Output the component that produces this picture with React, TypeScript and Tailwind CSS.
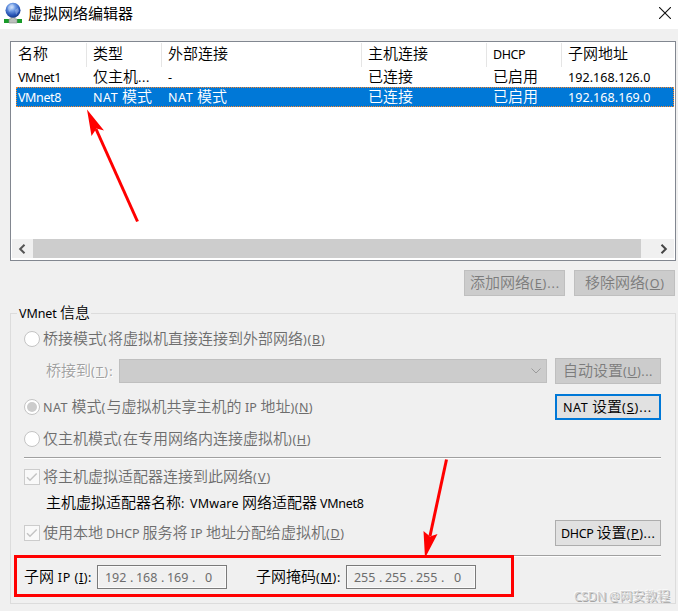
import { useLayoutEffect, useRef, useState } from "react";
import type { ReactNode } from "react";

const cjk = "font-['Noto_Sans_CJK_SC',sans-serif] text-[15px]";
const latin = "font-['Noto_Sans',sans-serif] text-[12.5px] font-normal";

/** Latin run tracked so that it fills exactly `w` pixels. */
function L({ w, children }: { w: number; children: ReactNode }) {
  const ref = useRef<HTMLSpanElement>(null);
  const [gap, setGap] = useState(0);
  useLayoutEffect(() => {
    const el = ref.current;
    if (!el) return;
    const count = (el.textContent ?? "").length;
    setGap((w - el.getBoundingClientRect().width) / count);
  }, [w]);
  return (
    <span ref={ref} className={latin} style={{ letterSpacing: gap }}>
      {children}
    </span>
  );
}

/** One line of mixed text; the line's own font sets the common baseline. */
function T({ children, className = "", weight = "font-[350]" }: { children: ReactNode; className?: string; weight?: string }) {
  return <div className={`h-5 shrink-0 whitespace-pre text-left leading-5 ${cjk} ${weight} ${className}`}>{children}</div>;
}

function Button({ children, kind = "normal", className = "" }: { children: ReactNode; kind?: "normal" | "disabled" | "focus"; className?: string }) {
  const look = {
    normal: "border border-[#adadad] bg-[#e1e1e1] text-black pt-px",
    disabled: "border border-[#bfbfbf] bg-[#cccccc] text-[#7c7c7c] pt-px",
    focus: "border-2 border-[#0078d7] bg-[#e1e1e1] text-black",
  }[kind];
  return <button className={`flex h-[26px] shrink-0 items-start ${look} ${className}`}>{children}</button>;
}

function Radio({ on = false }: { on?: boolean }) {
  return (
    <span className="flex size-4 shrink-0 items-center justify-center rounded-full border border-[#c4c4c4] bg-white">
      {on && <span className="size-[10px] rounded-full bg-[#cccccc]" />}
    </span>
  );
}

function Check() {
  return (
    <span className="size-4 shrink-0 border border-[#cccccc] bg-[#f9f9f9]">
      <svg viewBox="0 0 14 14" className="size-[14px]">
        <path d="M2 7.2 5 10.2 11.7 3.5" fill="none" stroke="#c4c4c4" strokeWidth="1.5" />
      </svg>
    </span>
  );
}

function Rule() {
  return <div className="h-[2px] w-[637px] border-t border-[#a0a0a0] bg-white" />;
}

function AddressField({ parts }: { parts: string[] }) {
  return (
    <div className="flex h-6 w-[130px] border border-[#7a7a7a] bg-[#f0f0f0] pl-[2px] text-[#6d6d6d] shadow-[inset_0_0_0_1px_#fafafa]">
      {parts.map((p, i) => (
        <T key={i} className="w-[31px]">
          <span className={p.length === 3 ? "inline-block w-[30px] pl-[5px]" : "inline-block w-[30px] pl-[12px]"}>
            <L w={p.length * 7.1}>{p}</L>
          </span>
          {i < 3 && <span className={latin}>.</span>}
        </T>
      ))}
    </div>
  );
}

const grid = "grid grid-cols-[75px_75px_200px_125px_75px_1fr]";
const divider = "h-6 border-l border-[#e5e5e5] pl-[6px]";

export default function App() {
  return (
    <div className="relative h-[611px] w-[678px] overflow-hidden bg-[#f0f0f0] text-black">
      <header className="flex h-[29px] items-start bg-white">
        <svg viewBox="0 0 18 22" className="ml-[4px] mt-[2px] h-[22px] w-[18px] shrink-0">
          <defs>
            <radialGradient id="globe" cx="42%" cy="30%" r="70%">
              <stop offset="0" stopColor="#dce9fb" />
              <stop offset=".35" stopColor="#6f9be4" />
              <stop offset=".75" stopColor="#2855b5" />
              <stop offset="1" stopColor="#173a8c" />
            </radialGradient>
          </defs>
          <path d="M0 17h18v4H0z" fill="#199b29" />
          <path d="M7 14h4v3h2v4H5v-4h2z" fill="#bcc0bd" stroke="#858a87" strokeWidth=".6" />
          <circle cx="9" cy="8.3" r="7.5" fill="url(#globe)" />
          <path d="M4 5q2-3 5-3l1 3-3 2-1 3q-2-1-2-5M11 8l3-2 1 3-3 4z" fill="#c5d8f7" opacity=".4" />
        </svg>
        <T weight="font-normal" className="ml-[6px] mt-[3px]">虚拟网络编辑器</T>
        <svg viewBox="0 0 12 12" className="ml-auto mr-[7px] mt-[7px] size-3 shrink-0">
          <path d="M0 0 12 12M12 0 0 12" stroke="#111" strokeWidth="1.1" />
        </svg>
      </header>

      <section className="ml-[10px] mt-[12px] flex h-[220px] w-[666px] flex-col border border-[#828790] bg-white">
        <div className={`${grid} h-[26px] pt-px`}>
          <T className="pl-[7px]">名称</T>
          <div className={divider}><T>类型</T></div>
          <div className={divider}><T>外部连接</T></div>
          <div className={divider}><T>主机连接</T></div>
          <div className={divider}><T><L w={32}>DHCP</L></T></div>
          <div className={divider}><T>子网地址</T></div>
        </div>
        <div className={`${grid} h-[19px]`}>
          <T className="-mt-[2px] pl-[7px]"><L w={43}>VMnet1</L></T>
          <T className="-mt-[2px] pl-[7px]">仅主机<L w={12}>...</L></T>
          <T className="-mt-[2px] pl-[7px]"><L w={5}>-</L></T>
          <T className="-mt-[2px] pl-[7px]">已连接</T>
          <T className="-mt-[2px] pl-[7px]">已启用</T>
          <T className="-mt-[2px] pl-[7px]"><L w={82.5}>192.168.126.0</L></T>
        </div>
        <div className="ml-[5px] mr-px h-5 border border-dotted border-[#ff8728] bg-[#0078d7] text-white">
          <div className={`${grid} -ml-[6px]`}>
            <T className="-mt-[2px] pl-[7px]"><L w={43}>VMnet8</L></T>
            <T className="-mt-[2px] pl-[7px]"><L w={29}>NAT </L>模式</T>
            <T className="-mt-[2px] pl-[7px]"><L w={29}>NAT </L>模式</T>
            <T className="-mt-[2px] pl-[7px]">已连接</T>
            <T className="-mt-[2px] pl-[7px]">已启用</T>
            <T className="-mt-[2px] pl-[7px]"><L w={82.5}>192.168.169.0</L></T>
          </div>
        </div>
        <div className="mx-px mb-[2px] mt-auto flex h-[19px] items-center bg-[#f0f0f0]">
          <span className="flex w-[21px] justify-center">
            <svg viewBox="0 0 8 10" className="mr-[2px] h-[10px] w-2"><path d="M6.5.8 2.2 5l4.3 4.2" fill="none" stroke="#555" strokeWidth="2" /></svg>
          </span>
          <span className="h-full w-[608px] bg-[#cdcdcd]" />
          <span className="flex flex-1 justify-center pl-[12px]">
            <svg viewBox="0 0 8 10" className="h-[10px] w-2"><path d="M1.5.8 5.8 5 1.5 9.2" fill="none" stroke="#444" strokeWidth="2" /></svg>
          </span>
        </div>
      </section>

      <div className="ml-[464px] mt-[9px] flex gap-[9px]">
        <Button kind="disabled" className="w-[101px] pl-[5px]"><T>添加网络<L w={30}>(<u>E</u>)...</L></T></Button>
        <Button kind="disabled" className="w-[101px] pl-[10px]"><T>移除网络<L w={20}>(<u>O</u>)</L></T></Button>
      </div>

      <section className="ml-[10px] mt-[17px] h-[291px] w-[666px] border border-[#dcdcdc] pl-[13px]">
        <T className="-ml-[7px] -mt-[12px] w-[74px] bg-[#f0f0f0] pl-[2px]"><L w={41}>VMnet </L>信息</T>
        <div className="mt-[7px] flex h-5 items-center text-[#6d6d6d]">
          <Radio />
          <T className="mb-[2px] ml-[3px]">桥接模式<L w={5}>(</L>将虚拟机直接连接到外部网络<L w={22.5}>)(<u>B</u>)</L></T>
        </div>
        <div className="mt-[9px] flex h-[26px] items-center">
          <T className="mb-[2px] ml-[22px] w-[73px] text-[#a0a0a0] [text-shadow:1px_1px_0_#fff]">桥接到<L w={23}>(<u>T</u>):</L></T>
          <div className="flex h-6 w-[428px] items-center justify-end border border-[#bfbfbf] bg-[#cccccc] pr-[5px]">
            <svg viewBox="0 0 10 6" className="h-[6px] w-[10px]"><path d="M.5.5 5 5 9.5.5" fill="none" stroke="#9a9a9a" /></svg>
          </div>
          <Button kind="disabled" className="ml-2 w-[106px] pl-[7px]"><T>自动设置<L w={30}>(<u>U</u>)...</L></T></Button>
        </div>
        <div className="mt-[10px] flex h-[26px] items-center text-[#6d6d6d]">
          <Radio on />
          <T className="mb-[2px] ml-[3px] w-[512px]"><L w={28.5}>NAT </L>模式<L w={5}>(</L>与虚拟机共享主机的<L w={19}> IP </L>地址<L w={22.5}>)(<u>N</u>)</L></T>
          <Button kind="focus" className="w-[106px] pl-[6px]"><T><L w={29}>NAT </L>设置<L w={30}>(<u>S</u>)...</L></T></Button>
        </div>
        <div className="mt-[9px] flex h-5 items-center text-[#6d6d6d]">
          <Radio />
          <T className="mb-[2px] ml-[3px]">仅主机模式<L w={5}>(</L>在专用网络内连接虚拟机<L w={23}>)(<u>H</u>)</L></T>
        </div>
        <div className="mt-2"><Rule /></div>
        <div className="mt-2 flex h-5 items-center text-[#6d6d6d]">
          <Check />
          <T className="mb-[2px] ml-[3px]">将主机虚拟适配器连接到此网络<L w={18.5}>(<u>V</u>)</L></T>
        </div>
        <T className="ml-[22px] mt-[5px]">主机虚拟适配器名称<L w={9}>: </L><L w={52}>VMware </L>网络适配器<L w={46.5}> VMnet8</L></T>
        <div className="mt-[8px] flex h-[26px] items-center text-[#6d6d6d]">
          <Check />
          <T className="mb-[2px] ml-[3px] w-[512px]">使用本地<L w={39.5}> DHCP </L>服务将<L w={18.5}> IP </L>地址分配给虚拟机<L w={18.5}>(<u>D</u>)</L></T>
          <Button className="w-[106px] pl-[5px]"><T><L w={35.5}>DHCP </L>设置<L w={29}>(<u>P</u>)...</L></T></Button>
        </div>
        <div className="mt-[9px]"><Rule /></div>
        <div className="mt-2 flex h-6 items-center">
          <T className="mb-[2px] w-[73px]">子网<L w={38}> IP (<u>I</u>):</L></T>
          <AddressField parts={["192", "168", "169", "0"]} />
          <T className="mb-[2px] ml-[29px] w-[90px]">子网掩码<L w={25}>(<u>M</u>):</L></T>
          <AddressField parts={["255", "255", "255", "0"]} />
        </div>
      </section>

      {/* Annotations lying over the dialog */}
      <div className="absolute left-[14px] top-[555px] h-[42px] w-[500px] border-[3px] border-[#ff0000]" />
      <svg viewBox="0 0 678 611" className="pointer-events-none absolute left-0 top-0 h-[611px] w-[678px]" fill="#ff0000">
        <path d="M87 109.500 104 130.500 96.500 128.500 91.500 136z" />
        <path d="m96 129 41.500 92.500" stroke="#ff0000" strokeWidth="3" />
        <path d="M425 558 423.500 531 430 536.500 437.500 534z" />
        <path d="m430 536 16.500-76.500" stroke="#ff0000" strokeWidth="3" />
      </svg>
      <T className="absolute left-[574px] top-[585px] text-[#cfcfcf] [text-shadow:-1px_-1px_0_#fafafa,1px_1px_0_#a4a4a4]">
        <L w={35}>CSDN </L><L w={11}>@</L><span className="text-[12.5px]">网安教程</span>
      </T>
    </div>
  );
}
